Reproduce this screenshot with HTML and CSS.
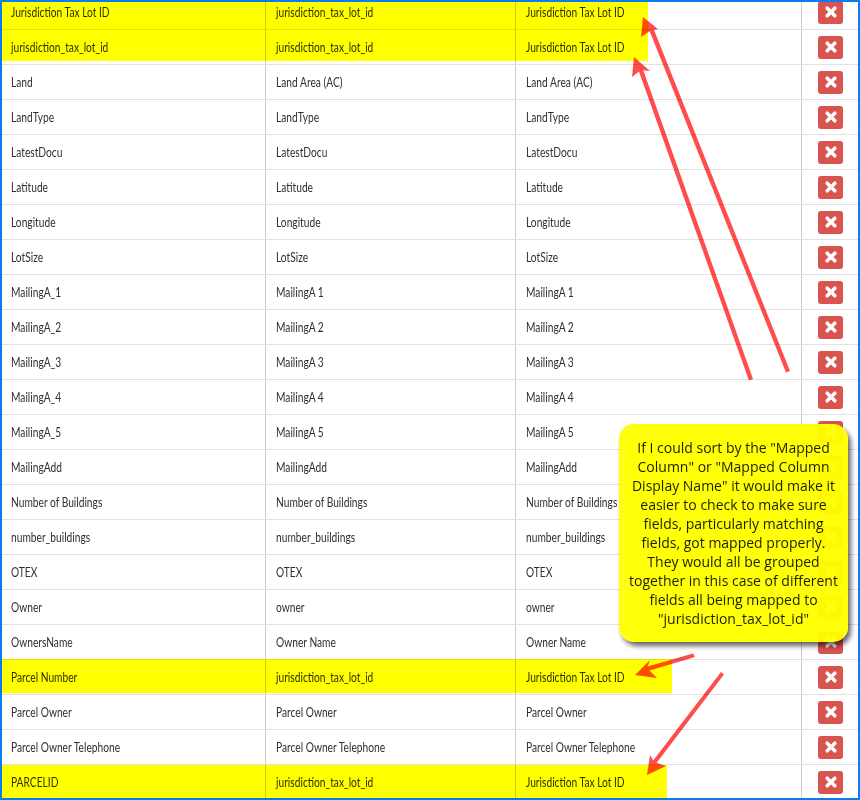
FILE: index.html
```html
<!DOCTYPE html>
<html lang="en">
<head>
<meta charset="utf-8">
<title>Column mappings</title>
<link rel="stylesheet" href="styles.css">
</head>
<body>
<div class="frame">
<svg class="defs" width="0" height="0" aria-hidden="true"><defs><symbol id="x" viewBox="0 0 14 14"><path d="M3.2 3.2L10.8 10.8M10.8 3.2L3.2 10.8" fill="none" stroke="#fff" stroke-width="3.6" stroke-linecap="round"/></symbol></defs></svg>
<div class="rows">
<div class="row"><div><span>Jurisdiction Tax Lot ID</span></div><div><span>jurisdiction_tax_lot_id</span></div><div><span>Jurisdiction Tax Lot ID</span></div><div class="act"><button><svg><use href="#x"/></svg></button></div></div>
<div class="row"><div><span>jurisdiction_tax_lot_id</span></div><div><span>jurisdiction_tax_lot_id</span></div><div><span>Jurisdiction Tax Lot ID</span></div><div class="act"><button><svg><use href="#x"/></svg></button></div></div>
<div class="row"><div><span>Land</span></div><div><span>Land Area (AC)</span></div><div><span>Land Area (AC)</span></div><div class="act"><button><svg><use href="#x"/></svg></button></div></div>
<div class="row"><div><span>LandType</span></div><div><span>LandType</span></div><div><span>LandType</span></div><div class="act"><button><svg><use href="#x"/></svg></button></div></div>
<div class="row"><div><span>LatestDocu</span></div><div><span>LatestDocu</span></div><div><span>LatestDocu</span></div><div class="act"><button><svg><use href="#x"/></svg></button></div></div>
<div class="row"><div><span>Latitude</span></div><div><span>Latitude</span></div><div><span>Latitude</span></div><div class="act"><button><svg><use href="#x"/></svg></button></div></div>
<div class="row"><div><span>Longitude</span></div><div><span>Longitude</span></div><div><span>Longitude</span></div><div class="act"><button><svg><use href="#x"/></svg></button></div></div>
<div class="row"><div><span>LotSize</span></div><div><span>LotSize</span></div><div><span>LotSize</span></div><div class="act"><button><svg><use href="#x"/></svg></button></div></div>
<div class="row"><div><span>MailingA_1</span></div><div><span>MailingA 1</span></div><div><span>MailingA 1</span></div><div class="act"><button><svg><use href="#x"/></svg></button></div></div>
<div class="row"><div><span>MailingA_2</span></div><div><span>MailingA 2</span></div><div><span>MailingA 2</span></div><div class="act"><button><svg><use href="#x"/></svg></button></div></div>
<div class="row"><div><span>MailingA_3</span></div><div><span>MailingA 3</span></div><div><span>MailingA 3</span></div><div class="act"><button><svg><use href="#x"/></svg></button></div></div>
<div class="row"><div><span>MailingA_4</span></div><div><span>MailingA 4</span></div><div><span>MailingA 4</span></div><div class="act"><button><svg><use href="#x"/></svg></button></div></div>
<div class="row"><div><span>MailingA_5</span></div><div><span>MailingA 5</span></div><div><span>MailingA 5</span></div><div class="act"><button><svg><use href="#x"/></svg></button></div></div>
<div class="row"><div><span>MailingAdd</span></div><div><span>MailingAdd</span></div><div><span>MailingAdd</span></div><div class="act"><button><svg><use href="#x"/></svg></button></div></div>
<div class="row"><div><span>Number of Buildings</span></div><div><span>Number of Buildings</span></div><div><span>Number of Buildings</span></div><div class="act"><button><svg><use href="#x"/></svg></button></div></div>
<div class="row"><div><span>number_buildings</span></div><div><span>number_buildings</span></div><div><span>number_buildings</span></div><div class="act"><button><svg><use href="#x"/></svg></button></div></div>
<div class="row"><div><span>OTEX</span></div><div><span>OTEX</span></div><div><span>OTEX</span></div><div class="act"><button><svg><use href="#x"/></svg></button></div></div>
<div class="row"><div><span>Owner</span></div><div><span>owner</span></div><div><span>owner</span></div><div class="act"><button><svg><use href="#x"/></svg></button></div></div>
<div class="row"><div><span>OwnersName</span></div><div><span>Owner Name</span></div><div><span>Owner Name</span></div><div class="act"><button><svg><use href="#x"/></svg></button></div></div>
<div class="row"><div><span>Parcel Number</span></div><div><span>jurisdiction_tax_lot_id</span></div><div><span>Jurisdiction Tax Lot ID</span></div><div class="act"><button><svg><use href="#x"/></svg></button></div></div>
<div class="row"><div><span>Parcel Owner</span></div><div><span>Parcel Owner</span></div><div><span>Parcel Owner</span></div><div class="act"><button><svg><use href="#x"/></svg></button></div></div>
<div class="row"><div><span>Parcel Owner Telephone</span></div><div><span>Parcel Owner Telephone</span></div><div><span>Parcel Owner Telephone</span></div><div class="act"><button><svg><use href="#x"/></svg></button></div></div>
<div class="row"><div><span>PARCELID</span></div><div><span>jurisdiction_tax_lot_id</span></div><div><span>Jurisdiction Tax Lot ID</span></div><div class="act"><button><svg><use href="#x"/></svg></button></div></div>
</div>
<div class="hl hl-a"></div>
<div class="hl hl-b"></div>
<div class="hl hl-c"></div>
<svg class="arrows" viewBox="0 0 860 800" width="860" height="800" aria-hidden="true">
<path d="M786 372.6L648 27L652 25L790 371Z"/><path d="M643 17L641 37L650 31L658 29Z"/>
<path d="M749 380.6L637 66L641 64L753 379Z"/><path d="M634 57L632 77L641 70L650 71Z"/>
<path d="M693 653.5L695 657L648 671L646 667Z"/><path d="M635 675L650 660L647 668L657 678Z"/>
<path d="M721 672L724 674.5L655 765L652 762Z"/><path d="M647 775L650 755L654 762L666 766Z"/>
</svg>
<div class="note">If I could sort by the "Mapped<br>Column" or "Mapped Column<br>Display Name" it would make it<br>easier to check to make sure<br>fields, particularly matching<br>fields, got mapped properly.<br>They would all be grouped<br>together in this case of different<br>fields all being mapped to<br>"jurisdiction_tax_lot_id"</div>
</div>
</body>
</html>
```
FILE: styles.css
```css
* { box-sizing: border-box; }
html, body { margin: 0; padding: 0; background: #fff; }
body { width: 860px; height: 800px; overflow: hidden; }
.frame {
  position: relative;
  width: 860px;
  height: 800px;
  overflow: hidden;
  background: #fff;
}
.frame::after {
  content: "";
  position: absolute;
  inset: 0;
  border: 2px solid #0a7cf0;
  pointer-events: none;
}
.defs { display: block; }
.rows { margin-top: -5px; font-family: Lato, "Liberation Sans", sans-serif; font-size: 13px; color: #2f2f33; }
.row {
  display: grid;
  grid-template-columns: 266px 250px 286px 1fr;
  height: 35px;
  border-bottom: 1px solid #e2e2e2;
  align-items: stretch;
}
.row > div {
  display: flex;
  align-items: center;
  padding-left: 11px;
  padding-bottom: 1px;
  border-right: 1px solid #cccccc;
  white-space: nowrap;
}
.row span {
  display: inline-block;
  transform: scaleX(0.785);
  transform-origin: left center;
}
.row > div:nth-child(2), .row > div:nth-child(3) { padding-left: 10px; }
.row > .act { border-right: 0; padding-left: 16px; padding-bottom: 0; }
button {
  display: flex;
  align-items: center;
  justify-content: center;
  width: 25px;
  height: 23px;
  padding: 0;
  border: 0;
  border-radius: 3px;
  background: #d9534f;
}
button svg { width: 14px; height: 14px; display: block; }
.hl { position: absolute; background: #ffff00; mix-blend-mode: multiply; }
.hl-a { left: 0; top: 0; width: 648px; height: 61px; }
.hl-b { left: 0; top: 659px; width: 672px; height: 34px; }
.hl-c { left: 0; top: 765px; width: 667px; height: 35px; }
.arrows { position: absolute; left: 0; top: 0; mix-blend-mode: multiply; fill: #ff4d4d; }
.note {
  position: absolute;
  left: 619px;
  top: 424px;
  width: 229px;
  height: 218px;
  display: flex;
  align-items: center;
  justify-content: center;
  text-align: center;
  font-family: "Open Sans", sans-serif;
  font-size: 14px;
  line-height: 19px;
  color: #1f1f00;
  background: rgba(255, 255, 0, 0.96);
  border-radius: 15px;
  box-shadow: 3px 4px 5px rgba(0, 0, 0, 0.6);
}
```
